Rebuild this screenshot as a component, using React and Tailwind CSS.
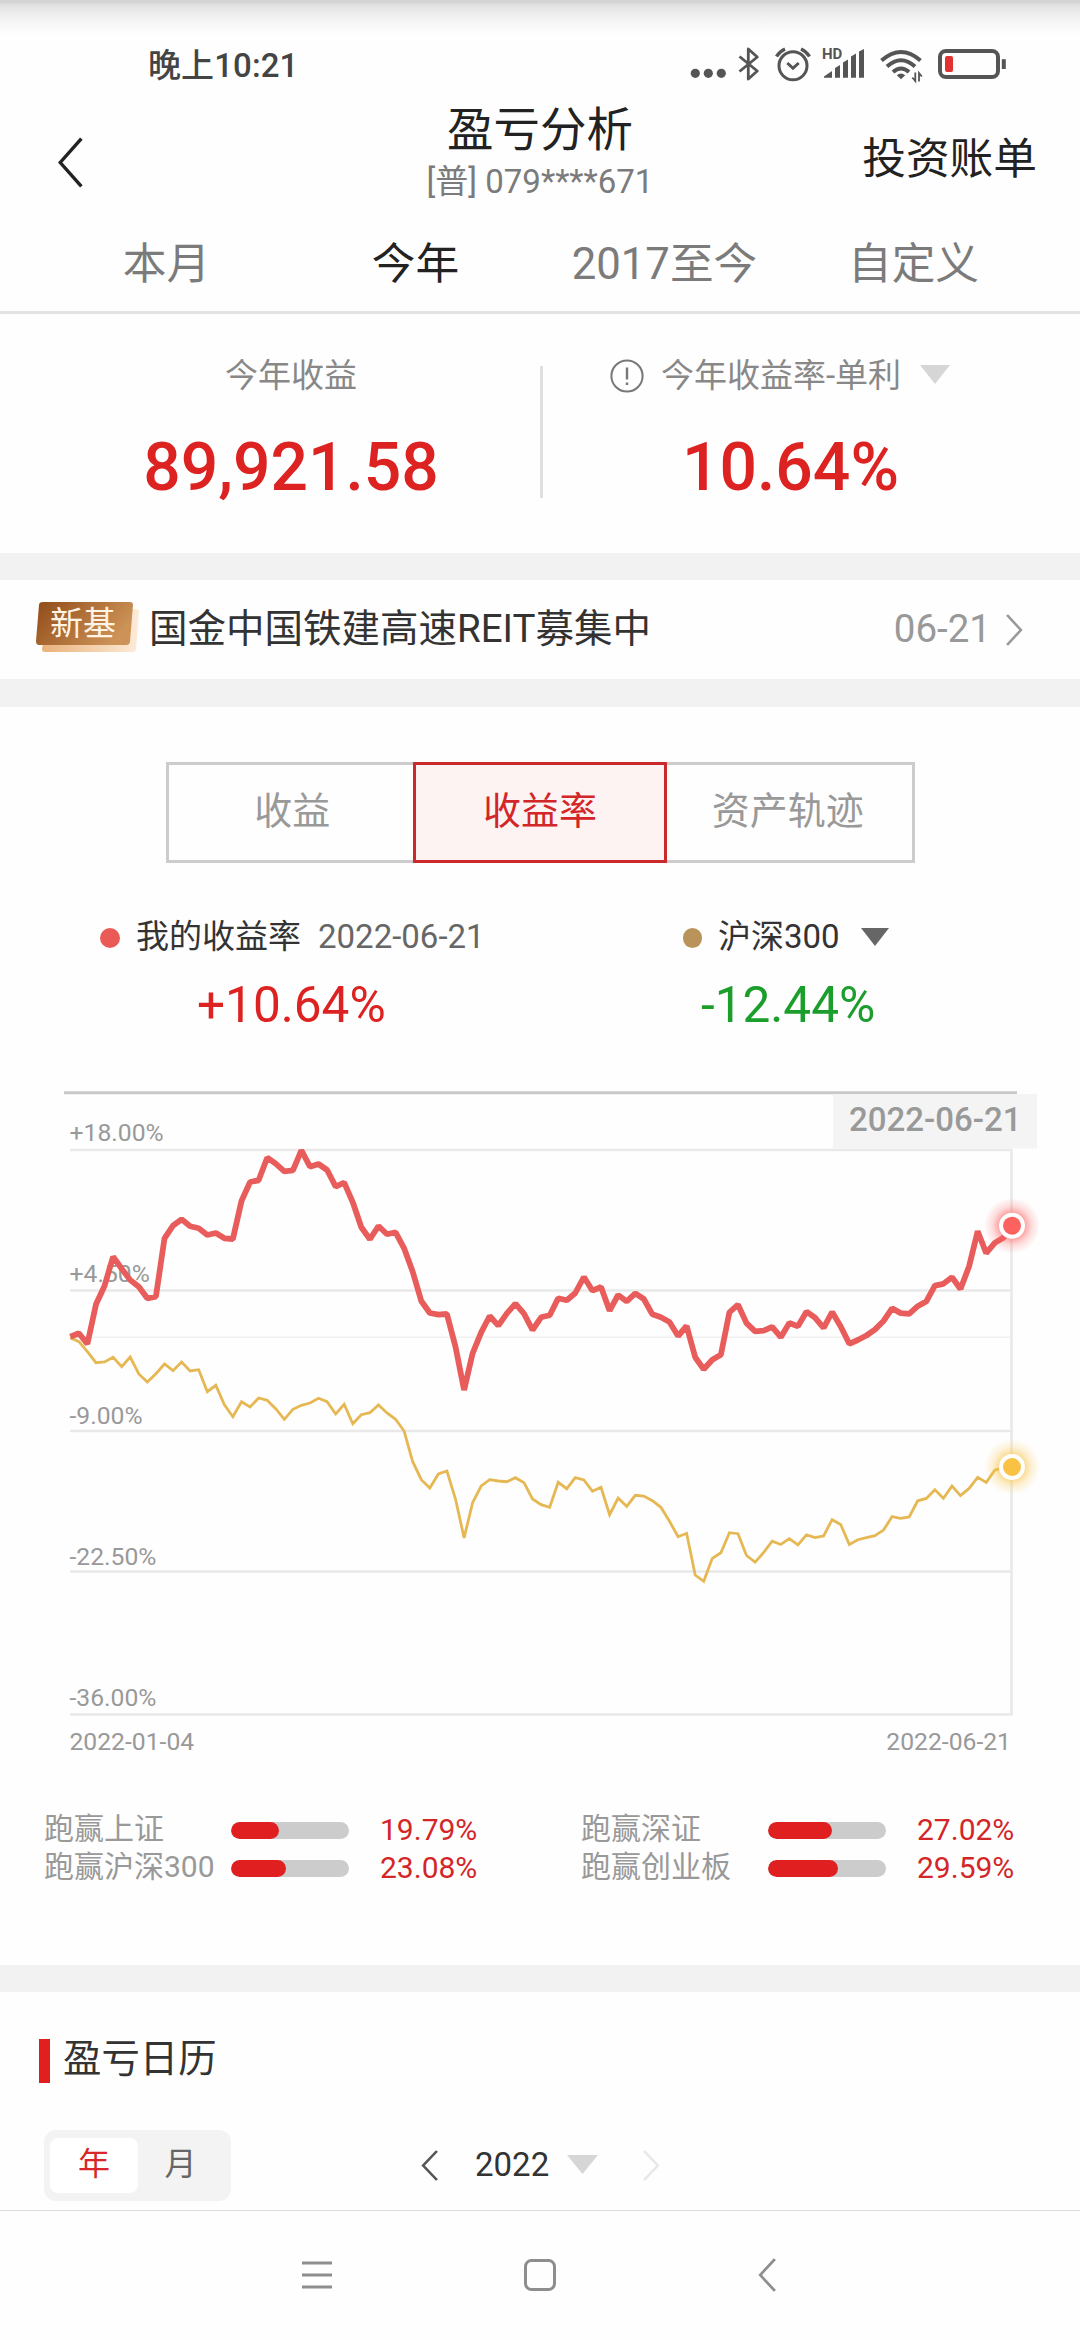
import React from 'react'
import clsx from 'clsx'

const periods = [
  { label: '本月' },
  { label: '今年', active: true },
  { label: '2017至今' },
  { label: '自定义' },
]

const chartTabs = [
  { label: '收益' },
  { label: '收益率', active: true },
  { label: '资产轨迹' },
]

const beats = [
  { label: '跑赢上证', value: '19.79%', fill: 48 },
  { label: '跑赢深证', value: '27.02%', fill: 64 },
  { label: '跑赢沪深300', value: '23.08%', fill: 55 },
  { label: '跑赢创业板', value: '29.59%', fill: 70 },
]

// y offsets inside the chart, one per trading day
const mine = [
  266.7, 263.3, 274, 234.3, 216, 186.7, 198.7, 210, 216.7, 228.3, 226.7, 168.3, 155.7, 149.3, 156.3, 158.3, 165, 163, 168.3, 169,
  131, 112, 110.3, 87.7, 93.7, 101.3, 100.3, 80.3, 96.7, 94, 100, 116.7, 112.7, 132.3, 157.3, 169.3, 156, 164.3, 162.3, 178.3,
  201.7, 231, 243, 244.7, 244, 276.7, 320, 283.3, 262.3, 246, 255.7, 243.3, 233.7, 243.7, 260, 247.3, 245.3, 228.3, 230.3, 223,
  207, 220.7, 217, 240.7, 225, 231.3, 223.3, 229, 244.3, 247.3, 252, 266, 256, 287.3, 299.3, 289.7, 284.7, 242.3, 234.7, 253.1,
  261.4, 260.7, 256.9, 267.2, 253.1, 256.2, 241.7, 247.6, 257.9, 242.1, 256.5, 273.8, 270, 265.5, 259.6, 251, 238.3, 243.1, 243.8, 236.2,
  231.4, 215.6, 213.8, 207.3, 219, 196.3, 161.2, 183.2, 172.9, 167.7, 155.6,
]

const csi300 = [
  267.7, 271.7, 281.7, 292.7, 292, 287.3, 296.7, 287, 304, 312, 303.7, 294, 300.7, 292, 301, 299.7, 321.7, 315.3, 334.7, 346.7,
  331.7, 337, 328, 330.3, 338.7, 349.3, 339.3, 335.3, 333, 328.3, 331.7, 344, 334.3, 353.7, 344.7, 342.7, 335, 343, 349.3, 361,
  391.7, 409.7, 418, 404, 401, 429, 468, 432.7, 416, 409.7, 411, 411.7, 407.7, 412.7, 429, 434.7, 437.3, 412.3, 418.7, 407.7,
  410, 421.3, 417.3, 444.7, 428, 436.3, 425.3, 426, 430.7, 437.3, 451.3, 466.7, 463.3, 505, 511.3, 488.3, 482.7, 462.7, 463.7, 485.5,
  492.1, 482.4, 471.1, 474.5, 468.7, 474.9, 464.9, 467.6, 465.9, 449.7, 454.5, 474.5, 469.7, 467.6, 465.6, 460.1, 446.6, 448.3, 447, 430.8,
  428.4, 419.8, 428.4, 416, 425.6, 418.4, 407.4, 412.5, 400.1, 397.7, 397,
]

const grid = [
  { y: 80, label: '+18.00%', baseline: 71 },
  { y: 220.5, label: '+4.50%', baseline: 212 },
  { y: 361, label: '-9.00%', baseline: 353.5 },
  { y: 501.5, label: '-22.50%', baseline: 494.5 },
  { y: 644.5, label: '-36.00%', baseline: 635.5 },
]

const toPoints = (ys) => ys.map((y, i) => `${(70.3 + i * 8.56).toFixed(1)},${y}`).join(' ')

function Chevron({ className, left, width = 2.5 }) {
  return (
    <svg className={className} viewBox="0 0 16 32" fill="none" stroke="currentColor" strokeWidth={width} preserveAspectRatio="none">
      <path d={left ? 'M15 1 L2 16 L15 31' : 'M1 1 L14 16 L1 31'} />
    </svg>
  )
}

function Triangle({ className }) {
  return (
    <svg className={className} viewBox="0 0 30 18" fill="currentColor" preserveAspectRatio="none">
      <path d="M0 0 H30 L15 18 Z" />
    </svg>
  )
}

function StatusBar() {
  return (
    <div className="h-[100px] shrink-0 flex justify-between pl-[148px] pr-[72px] bg-[linear-gradient(to_bottom,#d4d4d4_0px,#d4d4d4_3px,#e0e0e0_4px,#f0f0f0_16px,#fafafa_28px,#fefefe_36px)]">
      <div className="mt-[41px] h-[50px] leading-[50px] text-[33px] font-medium text-[#444] tracking-[0.1px]">晚上10:21</div>
      <svg className="w-[328px] h-[50px] mt-[40px]" viewBox="680 40 328 50" fill="none" stroke="#555" strokeWidth="3">
        <g fill="#555" stroke="none">
          <circle cx="695.3" cy="73.3" r="4.6" />
          <circle cx="708.3" cy="73.3" r="4.6" />
          <circle cx="721.3" cy="73.3" r="4.6" />
        </g>
        <path strokeWidth="2.8" strokeLinejoin="round" d="M739.5 56.5 L757.3 71 L748.3 79 V49 L757.3 57 L739.5 71.5" />
        <circle cx="793" cy="65.8" r="14" />
        <path d="M787.3 63 L793 68.3 L798.7 63" />
        <path strokeWidth="3.4" d="M776.5 56.5 Q779.5 51.5 785 49 M809.5 56.5 Q806.5 51.5 801 49" />
        <text x="822" y="59.3" className="text-[15px] font-bold" fill="#555" stroke="none">HD</text>
        <g fill="#555" stroke="none">
          <path d="M824 77.8 V76.5 L832 71 V77.8 Z" />
          <path d="M835 77.8 V68 L840 65 V77.8 Z" />
          <path d="M843 77.8 V62.5 L848 59.5 V77.8 Z" />
          <path d="M851 77.8 V56.5 L856 53.5 V77.8 Z" />
          <path d="M859 77.8 V51.5 L864 49 V77.8 Z" />
        </g>
        <path strokeWidth="4" d="M881.5 60.5 Q901 43.5 920.5 60.5" />
        <path strokeWidth="4" d="M887 66.5 Q901 54 915 66.5" />
        <path strokeWidth="4" d="M893 72 Q901 65 909 72" />
        <path fill="#555" stroke="none" d="M896.8 75.3 Q901 71.5 905.2 75.3 L901 79.2 Z" />
        <path strokeWidth="1.8" d="M915.3 72.5 V81 L912.3 77.5 M919 81.5 V73 L921.8 76.5" />
        <rect x="940" y="51" width="58" height="26" rx="6" strokeWidth="4" />
        <rect x="945" y="56" width="8" height="16" rx="2" fill="#e33030" stroke="none" />
        <path strokeWidth="4" d="M1003.8 59.2 V69" strokeLinecap="butt" />
      </svg>
    </div>
  )
}

function Header() {
  return (
    <header className="h-[211px] shrink-0 flex flex-col">
      <div className="h-[116px] grid grid-cols-3">
        <div className="pl-[57px] pt-[37px]">
          <Chevron left width={2.1} className="w-[26px] h-[51px] text-[#222]" />
        </div>
        <div className="flex flex-col items-center">
          <h1 className="h-[60px] leading-[60px] text-[46.5px] text-[#222]">盈亏分析</h1>
          <p className="h-[44px] leading-[44px] text-[33px] text-[#7b7b7b] whitespace-nowrap">[普] 079****671</p>
        </div>
        <div className="pr-[43px] pt-[29px] h-[60px] leading-[60px] text-right text-[43.7px] text-[#222]">投资账单</div>
      </div>
      <nav className="grid grid-cols-4 px-[42px] pt-[18px]">
        {periods.map((p) => (
          <div key={p.label} className={clsx('h-[60px] leading-[60px] text-center text-[43.7px]', p.active ? 'text-[#222]' : 'text-[#7b7b7b]')}>
            {p.label}
          </div>
        ))}
      </nav>
    </header>
  )
}

function Summary() {
  return (
    <section className="h-[242px] shrink-0 border-t-[3px] border-[#e3e3e3] flex">
      <div className="w-[540px] pl-[42px] pt-[37px] text-center">
        <div className="h-[50px] leading-[50px] text-[33px] text-[#888]">今年收益</div>
        <div className="mt-[27px] h-[80px] leading-[80px] text-[66px] font-medium text-[#dd2222]">89,921.58</div>
      </div>
      <div className="mt-[52px] w-[3px] h-[132px] bg-[#e0e0e0]" />
      <div className="w-[495px] pt-[37px]">
        <div className="flex items-center h-[50px] pl-[67px]">
          <svg className="w-[34px] h-[34px] text-[#777]" viewBox="0 0 34 34" fill="none" stroke="currentColor" strokeWidth="2">
            <circle cx="17" cy="17" r="15.6" />
            <path strokeWidth="2.4" d="M17 8.5 V20.5 M17 23.5 V26" />
          </svg>
          <span className="ml-[17px] leading-[50px] text-[33px] text-[#888]">今年收益率-单利</span>
          <Triangle className="ml-[19px] mt-[-3px] w-[30px] h-[19px] text-[#d6d6d6]" />
        </div>
        <div className="mt-[27px] h-[80px] leading-[80px] text-center text-[66px] font-medium text-[#dd2222]">10.64%</div>
      </div>
    </section>
  )
}

function Notice() {
  return (
    <section className="h-[154px] shrink-0 border-y-[27px] border-b-[28px] border-[#f2f2f2] flex items-center px-[36px]">
      <svg className="w-[104px] h-[52px] -mt-[6px]" viewBox="36 600 104 52">
        <defs>
          <linearGradient id="front" x1="0" y1="0" x2="1" y2="0.4">
            <stop offset="0" stopColor="#914b18" />
            <stop offset="1" stopColor="#cc9257" />
          </linearGradient>
          <linearGradient id="back" x1="0" y1="0" x2="1" y2="0">
            <stop offset="0" stopColor="#e9b27a" />
            <stop offset="1" stopColor="#fdebd9" />
          </linearGradient>
        </defs>
        <path fill="url(#back)" d="M49 608 H136 Q139 608 139 611 L136 648 Q136 651 132 651 H45 Q42 651 42 648 Z" />
        <path fill="url(#front)" d="M43 601 H130 Q133 601 133 604 L130 640 Q130 644 126 644 H39 Q36 644 36 640 L39 604 Q39 601 43 601 Z" />
        <text x="50" y="633.5" className="text-[33px]" fill="#fff3e4">新基</text>
      </svg>
      <span className="ml-[9px] -mt-[2px] leading-[60px] text-[38.5px] text-[#333]">国金中国铁建高速REIT募集中</span>
      <span className="ml-auto -mt-[1px] leading-[60px] text-[38.5px] text-[#999]">06-21</span>
      <Chevron className="ml-[15px] mr-[21px] w-[17px] h-[32px] text-[#999]" />
    </section>
  )
}

function Marker({ y, color, id }) {
  return (
    <g>
      <defs>
        <radialGradient id={id}>
          <stop offset="0.4" stopColor={color} stopOpacity="0.65" />
          <stop offset="0.7" stopColor={color} stopOpacity="0.22" />
          <stop offset="1" stopColor={color} stopOpacity="0" />
        </radialGradient>
      </defs>
      <circle cx="1012" cy={y} r="28" fill={`url(#${id})`} />
      <circle cx="1012" cy={y} r="13" fill="#fff" />
      <circle cx="1012" cy={y} r="9" fill={color} />
    </g>
  )
}

function Chart() {
  return (
    <svg className="w-[1080px] h-[700px] shrink-0" viewBox="0 0 1080 700" fill="none">
      <path d="M64 22.7 H1017" stroke="#c8c8c8" strokeWidth="3" />
      {grid.map((g) => (
        <g key={g.label}>
          <path d={`M70 ${g.y} H1012`} stroke="#e9e9e9" strokeWidth="2.6" />
          <text x="69.5" y={g.baseline} className="text-[24.7px]" fill="#999">{g.label}</text>
        </g>
      ))}
      <path d="M70 267.3 H1012" stroke="#f0f0f0" strokeWidth="1.6" />
      <path d="M1011.5 79 V645" stroke="#e9e9e9" strokeWidth="2.6" />
      <rect x="833" y="24" width="204" height="54.5" fill="#f4f4f4" />
      <text x="849" y="60.8" className="text-[33px] font-medium" fill="#999">2022-06-21</text>
      <polyline points={toPoints(csi300)} stroke="#e6b854" strokeWidth="2.8" />
      <polyline points={toPoints(mine)} stroke="#e85d5b" strokeWidth="5.8" strokeLinejoin="bevel" />
      <Marker id="glow-mine" y={155.7} color="#fb6260" />
      <Marker id="glow-csi" y={397} color="#f9c244" />
      <text x="69.5" y="680" className="text-[24.7px]" fill="#999">2022-01-04</text>
      <text x="1011" y="680" textAnchor="end" className="text-[24.7px]" fill="#999">2022-06-21</text>
    </svg>
  )
}

function Performance() {
  return (
    <section className="h-[1258px] shrink-0 pt-[55px] flex flex-col">
      <div className="mx-auto w-[749px] h-[101px] shrink-0 grid grid-cols-3 border-[3px] border-[#ccc]">
        {chartTabs.map((t) => (
          <div
            key={t.label}
            className={clsx(
              'text-center text-[38px]',
              t.active ? '-m-[3px] border-[3px] leading-[93px] border-[#cb2a2d] bg-[#fdf3f2] text-[#d32628]' : 'leading-[93px] text-[#999]'
            )}
          >
            {t.label}
          </div>
        ))}
      </div>
      <div className="h-[200px] shrink-0 pt-[49px] flex">
        <div className="w-[583px]">
          <div className="flex items-center h-[50px] pl-[100px] text-[33px]">
            <i className="w-[20px] h-[20px] mt-[2px] rounded-full bg-[#ea5b58]" />
            <span className="ml-[16px] text-[#333]">我的收益率</span>
            <span className="ml-[17px] text-[#666]">2022-06-21</span>
          </div>
          <div className="pl-[197px] mt-[11px] h-[64px] leading-[64px] text-[49.5px] text-[#dd2222]">+10.64%</div>
        </div>
        <div>
          <div className="flex items-center h-[50px] pl-[100px] text-[33px]">
            <i className="w-[19px] h-[20px] mt-[2px] rounded-full bg-[#ba935a]" />
            <span className="ml-[16px] text-[#333]">沪深300</span>
            <Triangle className="ml-[21px] w-[28px] h-[18px] text-[#666]" />
          </div>
          <div className="pl-[118px] mt-[11px] h-[64px] leading-[64px] text-[49.5px] text-[#1c9e2d]">-12.44%</div>
        </div>
      </div>
      <div className="h-[7px] shrink-0" />
      <Chart />
      <div className="mt-[40px] pl-[44px] grid grid-cols-[537px_1fr]">
        {beats.map((b) => (
          <div key={b.label} className="h-[38px] flex items-center text-[30px] whitespace-nowrap">
            <span className="w-[187px] leading-[38px] text-[#999]">{b.label}</span>
            <div className="w-[118px] h-[17px] mt-[2px] rounded-full bg-[#ccc] overflow-hidden">
              <div className="h-full rounded-full bg-[#e02020]" style={{ width: b.fill }} />
            </div>
            <span className="ml-[31px] text-[#d32628]">{b.value}</span>
          </div>
        ))}
      </div>
    </section>
  )
}

function Calendar() {
  return (
    <section className="h-[245px] shrink-0 border-t-[27px] border-[#f2f2f2]">
      <div className="pt-[41px] pl-[39px] flex items-center">
        <i className="mt-[4px] w-[11px] h-[44px] bg-[#e02020]" />
        <h2 className="ml-[13px] h-[52px] leading-[52px] text-[38.4px] text-[#333]">盈亏日历</h2>
      </div>
      <div className="mt-[45px] h-[71px] flex items-center pl-[44px]">
        <div className="w-[187px] h-[71px] rounded-xl bg-[#f3f3f3] p-[6px] flex items-center">
          <div className="w-[88px] h-[55px] leading-[53px] rounded-lg bg-white text-center text-[32px] text-[#d8262a]">年</div>
          <div className="w-[85px] h-[55px] leading-[53px] text-center text-[32px] text-[#666]">月</div>
        </div>
        <Chevron left className="ml-[190px] w-[17px] h-[31px] text-[#555]" />
        <span className="ml-[37px] -mt-[2px] text-[33px] text-[#333]">2022</span>
        <Triangle className="ml-[18px] -mt-[3px] w-[31px] h-[19px] text-[#d6d6d6]" />
        <Chevron className="ml-[45px] w-[17px] h-[31px] text-[#e8e8e8]" />
      </div>
    </section>
  )
}

function SystemNav() {
  return (
    <footer className="h-[130px] shrink-0 border-t border-[#ddd] pb-[2px] flex items-center text-[#8e8e8e]">
      <svg className="ml-[301px] w-[32px] h-[34px]" viewBox="0 0 32 34" stroke="currentColor" strokeWidth="3">
        <path d="M1 5 H31 M1 17 H31 M1 29 H31" />
      </svg>
      <svg className="ml-[190px] w-[34px] h-[34px]" viewBox="0 0 34 34" fill="none" stroke="currentColor" strokeWidth="3">
        <rect x="2.5" y="2.5" width="29" height="29" rx="6" />
      </svg>
      <Chevron left className="ml-[201px] w-[18px] h-[34px]" />
    </footer>
  )
}

export default function App() {
  return (
    <div className="w-[1080px] h-[2340px] overflow-hidden flex flex-col bg-[#fefefe] font-['Roboto','Noto_Sans_CJK_SC',sans-serif]">
      <StatusBar />
      <Header />
      <Summary />
      <Notice />
      <Performance />
      <Calendar />
      <SystemNav />
    </div>
  )
}
